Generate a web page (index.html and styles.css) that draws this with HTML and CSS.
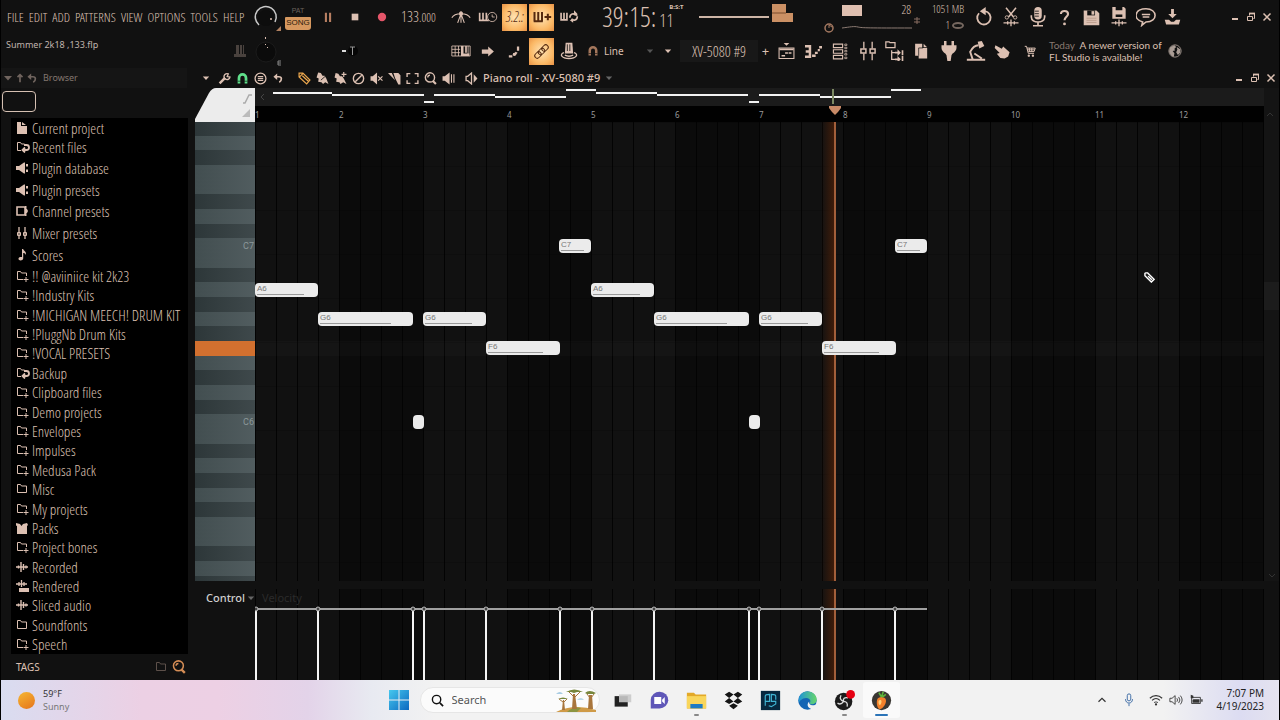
FILE: index.html
```html
<!DOCTYPE html>
<html lang="en">
<head>
<meta charset="utf-8">
<title>FL Studio - Piano roll</title>
<link rel="stylesheet" href="styles.css">
</head>
<body>
<svg class="sprite" aria-hidden="true">
  <symbol id="plus-folder" viewBox="0 0 14 12"><path d="M7 9.500H1.500v-8h3l1 1.500h5v3M7.500 9.500h5M10 7v5"/></symbol>
  <symbol id="folder" viewBox="0 0 14 12"><path d="M1.500 1.500h3l1 1.500h5v6.500h-9z"/></symbol>
  <symbol id="back-folder" viewBox="0 0 14 12"><path d="M5 9.500H1.500v-8h3l1 1.500h3"/><path d="M8 4h2.500a2 2 0 0 1 0 5H7M9 6.500L6.500 9 9 11.500" stroke-width="1.800"/></symbol>
  <symbol id="doc" viewBox="0 0 14 12"><path class="f" d="M1 0h4v4h6v8H1zM6 0l4 3H6z"/></symbol>
  <symbol id="plug" viewBox="0 0 14 12"><path class="f" d="M0 4h3l5-3.500h1v11H8L3 8H0zM10 2h2v2.500h-2zM10 7.500h2V10h-2z"/></symbol>
  <symbol id="channel" viewBox="0 0 14 12"><path d="M1 2h8v8H1z" stroke-width="1.600"/><path class="f" d="M9 4h2l1 2-1 2H9zM9 1h1.500v10H9z"/></symbol>
  <symbol id="mixer" viewBox="0 0 14 12"><path d="M3 0v12M9 0v12" stroke-width="1.300"/><path d="M1.500 5.500h3v3h-3zM7.500 5.500h3v3h-3z"/></symbol>
  <symbol id="note" viewBox="0 0 14 12"><path class="f" d="M6 0h1.200c0 2 3.800 2 2.500 6C9.500 4 7.500 4 7.200 4v5.500C7 12 2 12 2.500 9.500 3 7.700 5 7.800 6 8z"/></symbol>
  <symbol id="pack" viewBox="0 0 14 12"><path class="f" d="M0 1l4 1 1.500 2L7 2l4-1 1 2-1 1v8H1V4L0 3.500z"/></symbol>
  <symbol id="wave" viewBox="0 0 14 12"><path d="M0 6h12M2.500 4.500v3M5 1v10M7.500 3v6M10 4.500v3" stroke-width="1.400"/></symbol>
  <symbol id="rendered" viewBox="0 0 14 12"><path d="M0 4h11M3 2v4M5.500 0v7M8 2v4" stroke-width="1.300"/><path class="f" d="M3 8h10v4H3z"/></symbol>
  <symbol id="caret" viewBox="0 0 10 10"><path class="f" d="M1 3h8L5 7.500z"/></symbol>
  <symbol id="min" viewBox="0 0 12 12"><path class="f" d="M3 7h6v2H3z"/></symbol>
  <symbol id="restore" viewBox="0 0 12 12"><path d="M2.500 5.500h5v4h-5zM4.500 4.500v-2h5v5h-1"/><path d="M4 2.500h6" stroke-width="1.800"/></symbol>
  <symbol id="close" viewBox="0 0 12 12"><path d="M2.500 2.500l7 7M9.500 2.500l-7 7" stroke-width="1.500"/></symbol>

  <symbol id="metro" viewBox="0 0 24 24"><path d="M12 5v14M12 8l-4 11M12 8l4 11M1 13c2-4 6-5 11-5s9 1 11 5" stroke-width="1.300"/><circle class="f" cx="12" cy="8" r="2.500"/></symbol>
  <symbol id="waitkeys" viewBox="0 0 24 24"><path d="M2 7v9M6 7v9M10 7v9M1 16h12" stroke-width="2"/><circle cx="17" cy="12" r="5.500"/><path d="M17 9v3h3"/></symbol>
  <symbol id="blendkeys" viewBox="0 0 24 24"><path d="M3 6v11M7.500 6v11M12 6v11M2 17h11M15 12h8M19 8v8" stroke-width="2.400"/></symbol>
  <symbol id="loopkeys" viewBox="0 0 24 24"><path d="M2.500 7v8M6 7v8M9.500 7v8M1.500 15.500h9" stroke-width="2"/><path d="M13 13c0-5 5-6 7-3M22 11c0 5-5 6-7 3" stroke-width="2"/><path class="f" d="M18 4v5h-1l5 2V8zM17 14v5l-4-3z"/></symbol>
  <symbol id="keys" viewBox="0 0 24 24"><path d="M1 6h22v12H1zM5 6v12M9 6v12M1 10h10M1 14h10"/><path class="f" d="M12 6h3v12h-3zM17 6h2v8h-2zM20 6h1v12h-1zM13 15h9v3h-9z"/></symbol>
  <symbol id="arrow" viewBox="0 0 24 24"><path class="f" d="M4 9h9V5l8 7-8 7v-4H4z"/></symbol>
  <symbol id="steps" viewBox="0 0 24 24"><path d="M4 19h5M10 16c3 0 4-1 5-3M17 11v-6" stroke-width="3.200"/><circle class="f" cx="12" cy="16" r="2.300"/></symbol>
  <symbol id="link" viewBox="0 0 24 24"><g transform="rotate(-45 12 12)" stroke-width="1.400"><rect x="0" y="8.500" width="10" height="7" rx="3.500"/><rect x="7" y="8.500" width="10" height="7" rx="3.500"/><rect x="14" y="8.500" width="10" height="7" rx="3.500"/></g></symbol>
  <symbol id="hat" viewBox="0 0 24 24"><path class="f" d="M8 2h8l1 13H7z"/><path d="M10 4v8M13 4v8" stroke="#111"/><path d="M6 14c-6 2-3 7 6 7s12-5 6-7M7 17c3 1.500 7 1.500 10 0" stroke-width="1.600"/></symbol>
  <symbol id="magnet" viewBox="0 0 24 24"><path d="M5.500 21V11a6.500 6.500 0 0 1 13 0v10" stroke-width="5"/><path d="M3 17h6M15 17h6" stroke="#111" stroke-width="1.200"/></symbol>
  <symbol id="undo-big" viewBox="0 0 24 24"><path d="M6 7.500A8 8 0 1 0 13 5" stroke-width="2.200"/><path class="f" d="M14 0v10L7 5z"/></symbol>
  <symbol id="cut" viewBox="0 0 24 24"><path d="M6 1l9 11M18 1L9 12" stroke-width="1.800"/><circle cx="7" cy="12.500" r="2"/><circle cx="17" cy="12.500" r="2"/><path d="M3 19h18M8 17v4M12 15v8M16 17v4" stroke-width="1.600"/></symbol>
  <symbol id="mic" viewBox="0 0 24 24"><rect class="f" x="7.500" y="0" width="9" height="15" rx="4.500"/><path d="M8 5h5M8 8h5M8 11h5" stroke="#111"/><path d="M4 10v2c0 8 16 8 16 0v-2M12 18v4M6 22.500h12" stroke-width="2"/></symbol>
  <symbol id="help" viewBox="0 0 24 24"><path d="M7 7c0-6 10-5 10 0 0 4-5 4-5 9" stroke-width="3"/><circle class="f" cx="12" cy="21" r="2"/></symbol>
  <symbol id="save" viewBox="0 0 24 24"><path class="f" d="M1 2h18l4 4v17H1z"/><path d="M6 2h11v7H6z" fill="#111" stroke="none"/><path class="f" d="M12 3h4v5h-4z"/><path d="M5 13h14M5 16h14M5 19h14" stroke="#b09080"/></symbol>
  <symbol id="savenew" viewBox="0 0 24 24"><path class="f" d="M4 0h14l2 2v12H4z"/><path d="M8 0h8v4H8zM8 9h8v3H8z" fill="#111" stroke="none"/><path d="M3 19h18M8 17v4M12 15v8M16 17v4" stroke-width="1.600"/></symbol>
  <symbol id="chat" viewBox="0 0 24 24"><path d="M8 18l-1 4 5-4c15 0 14-16 0-16S-4 15 8 18zM7 9h10M8 12h8" stroke-width="1.900"/></symbol>
  <symbol id="download" viewBox="0 0 24 24"><path class="f" d="M10 0h4v7h4l-6 6-6-6h4zM1 15h6l3 3h4l3-3h6l-2 7H3z"/></symbol>
  <symbol id="playlist" viewBox="0 0 24 24"><path class="f" d="M8 0h8l-4 4z"/><path d="M1.500 7h21v15h-21z" stroke-width="1.500"/><path d="M2 9h20M5 18h5M10 14h4M15 14h4" stroke-width="2.200"/></symbol>
  <symbol id="roll" viewBox="0 0 24 24"><path d="M0 4.500h7v15H0M1 12h6" stroke-width="3.500"/><path d="M10 18h5M14 14h4M18 10h3M20 6h4" stroke-width="3.200"/></symbol>
  <symbol id="rack" viewBox="0 0 24 24"><path d="M2 1.500h13v5H2zM2 9.500h13v5H2zM2 17.500h13v5H2z" stroke-width="1.600"/><path d="M18 1.500h3v2h-3zM18 6h3v2h-3zM18 10.500h3v2h-3zM18 15h3v2h-3zM18 20h3v2h-3z"/></symbol>
  <symbol id="faders" viewBox="0 0 24 24"><path d="M7 1v8M7 15v8M17 1v8M17 15v8" stroke-width="1.600"/><path d="M3.500 9.500h6v5h-6zM14.500 9.500h6v5h-6z" stroke-width="1.800"/></symbol>
  <symbol id="tree" viewBox="0 0 24 24"><path d="M1 1h4l1 1h6v6H1zM8 11v11h4M8 14h4" stroke-width="1.500"/><path class="f" d="M12 13h3v-3l4 4-4 4v-3h-3zM12 21h3v-3l4 4-4 4v-3h-3zM20 11h2v6h-2zM20 18h2v6h-2z"/></symbol>
  <symbol id="copy" viewBox="0 0 24 24"><path class="f" d="M3 1h10v6h7v15H8v-4H3z"/><path d="M8 18V7h6" stroke="#111" stroke-width="1"/><path class="f" d="M15 1l5 5h-5z"/></symbol>
  <symbol id="plugin" viewBox="0 0 24 24"><path class="f" d="M6 0h3v5h6V0h3v5h3v3c0 5-5 6-6 9l-1 7h-4l-1-7c-1-3-6-4-6-9V5h3z"/></symbol>
  <symbol id="lamp" viewBox="0 0 24 24"><path class="f" d="M14 1l5-1 3 6-6 3z"/><path d="M15 5c-5 0-8 4-10 8l3 9M1 22.500h22M10 15l9 6" stroke-width="2.300"/></symbol>
  <symbol id="hand" viewBox="0 0 24 24"><path class="f" d="M2 3l9 5 2-3 9 8-2 6-5 3-6-1-5-6 4-1-7-7z"/></symbol>
  <symbol id="cart" viewBox="0 0 24 24"><path d="M3 4h3l3 12h10M7 7h14l-2 6H9M11 7v6M15 7v6M7 10h13" stroke-width="1.700"/><circle class="f" cx="10" cy="20" r="2"/><circle class="f" cx="17" cy="20" r="2"/></symbol>
  <symbol id="globe" viewBox="0 0 24 24"><circle cx="12" cy="12" r="10.500" stroke-width="1.500"/><path class="f" d="M4 5l7-3 3 3-3 3 1 3-4 1 3 4-1 6c-5-1-8-7-8-10zM15 5l6 4v6l-4 4-3-5 2-4z"/></symbol>

  <symbol id="wrench" viewBox="0 0 24 24"><path d="M3 21L13 11" stroke-width="4.500"/><path d="M19 3.500a5.500 5.500 0 1 0 3 6l-5-1z" stroke-width="2.500"/></symbol>
  <symbol id="menu-circle" viewBox="0 0 24 24"><circle cx="12" cy="12" r="10" stroke-width="2.400"/><path d="M7 8.500h10M7 12h10M7 15.500h10" stroke-width="2"/></symbol>
  <symbol id="undo" viewBox="0 0 24 24"><path d="M8 9h6c8 0 8 9 1 13" stroke-width="4"/><path class="f" d="M1 9l9-8v16z"/></symbol>
  <symbol id="pencil" viewBox="0 0 24 24"><path d="M2 2h7l13 13-6 7L2 9zM3 9l6-6M8 7l12 11" stroke-width="2.200"/></symbol>
  <symbol id="brush" viewBox="0 0 24 24"><path class="f" d="M4 1l5 1 3 5 4 0 3 5 4 10-6-3-4 3-3-3-6-1 1-6-4-2z"/><path d="M9 15l8-7" stroke="#111" stroke-width="1.500"/></symbol>
  <symbol id="brushplus" viewBox="0 0 24 24"><path class="f" d="M3 2l5 1 3 5 4 0 3 4 5 10-6-3-5 3-2-3-6-1 1-6-4-2z"/><path d="M18 0v9M14 4.500h9" stroke-width="2.200"/></symbol>
  <symbol id="ban" viewBox="0 0 24 24"><circle cx="12" cy="12" r="9.500" stroke-width="2.600"/><path d="M6 18L18 6" stroke-width="2.500"/></symbol>
  <symbol id="mute" viewBox="0 0 24 24"><path class="f" d="M1 8h4l8-7v22l-8-7H1z"/><path d="M15 8l8 8M23 8l-8 8" stroke-width="2.200"/></symbol>
  <symbol id="slice" viewBox="0 0 24 24"><path class="f" d="M0 2h7l6 13zM10 2h9l4 4v17h-4l-6-12z"/></symbol>
  <symbol id="select" viewBox="0 0 24 24"><path d="M2 9V3h6M16 3h6v6M22 15v6h-6M8 21H2v-6" stroke-width="2.500"/></symbol>
  <symbol id="zoom" viewBox="0 0 24 24"><circle cx="11" cy="10" r="8.500" stroke-width="2.600"/><path d="M16 16l6 6" stroke-width="4"/><path d="M7 10c0-3 2-4 4-4" stroke-width="2.500"/></symbol>
  <symbol id="playback" viewBox="0 0 24 24"><path class="f" d="M1 8h4l9-7v22l-9-7H1z"/><path d="M17.500 4v16M22 4v16" stroke-width="2"/></symbol>
  <symbol id="speaker" viewBox="0 0 24 24"><path d="M2 8h3l7-6v20l-7-6H2z" stroke-width="2.400"/><path class="f" d="M16 4l7 8-7 8z"/></symbol>
</svg>

<div class="app">
  <header class="top">
    <div class="bar">
      <nav class="menu" aria-label="Main menu">
        <button>FILE</button><button>EDIT</button><button>ADD</button><button>PATTERNS</button><button>VIEW</button><button>OPTIONS</button><button>TOOLS</button><button>HELP</button>
      </nav>
      <svg class="knob" viewBox="0 0 32 32" role="img" aria-label="Main volume"><path d="M9 24A10.500 10.500 0 1 1 25 21" stroke="#c9c9c9" stroke-width="1.500"/><circle cx="16" cy="17" r="8" fill="#0d0d0d" stroke="none"/><circle class="f" cx="21" cy="18" r="1"/><path d="M31 25v5h-5z" fill="#b08060" stroke="none"/></svg>
      <div class="mode"><button class="pat">PAT</button><button class="song">SONG</button></div>
      <button class="tb" aria-label="Pause"><svg viewBox="0 0 24 24"><path d="M9.500 7v11M14.500 7v11" stroke="#b87f62" stroke-width="2.500"/></svg></button>
      <button class="tb" aria-label="Stop"><svg viewBox="0 0 24 24"><path class="f" d="M8 8h8v8H8z"/></svg></button>
      <button class="tb rec" aria-label="Record"><svg viewBox="0 0 24 24"><circle class="f" cx="12" cy="12" r="5"/></svg></button>
      <div class="tempo">133<small>.000</small></div>
      <button class="tb" aria-label="Metronome"><svg><use href="#metro"/></svg></button>
      <button class="tb" aria-label="Wait for input"><svg><use href="#waitkeys"/></svg></button>
      <button class="tb lit" aria-label="Countdown"><i>3.2.:</i></button>
      <button class="tb lit" aria-label="Blend recording"><svg><use href="#blendkeys"/></svg></button>
      <button class="tb" aria-label="Loop recording"><svg><use href="#loopkeys"/></svg></button>
      <div class="time">39:15:<div class="ticks"><span class="unit">B:S:T</span><small>11</small></div></div>
      <div class="pos"><span></span></div>
      <svg class="blocks" viewBox="0 0 46 34" aria-hidden="true"><path d="M1 4h14v9h7v9H1z" fill="#cb9064" stroke="none"/><path d="M1 13h14" stroke="#7a4c2c"/></svg>
      <div class="cpu">
        <svg viewBox="0 0 108 34" aria-hidden="true"><path d="M25 5h20v11H25z" fill="#dfbfb0" stroke="none"/><circle cx="12" cy="28" r="4" stroke="#a57961" stroke-width="1.500"/><path d="M12 28v-3l3 2" stroke="#a57961"/><path d="M25 28c8-1 12-2 16-1s12 1 54 1" stroke="#8c7b73"/><path d="M100 17v7M97 19h6M97 22h6" stroke="#8a6f62"/></svg>
        <span>28</span>
      </div>
      <div class="mem"><span>1051 MB</span><span>1 <b></b></span></div>
      <button class="tb" aria-label="Undo"><svg><use href="#undo-big"/></svg></button>
      <button class="tb" aria-label="Edit audio"><svg><use href="#cut"/></svg></button>
      <button class="tb" aria-label="Record audio"><svg><use href="#mic"/></svg></button>
      <button class="tb" aria-label="Help"><svg class="mid"><use href="#help"/></svg></button>
      <button class="tb" aria-label="Save"><svg class="mid"><use href="#save"/></svg></button>
      <button class="tb" aria-label="Save new version"><svg><use href="#savenew"/></svg></button>
      <button class="tb" aria-label="Feedback"><svg><use href="#chat"/></svg></button>
      <button class="tb" aria-label="Download"><svg class="mid"><use href="#download"/></svg></button>
      <div class="win"><button aria-label="Minimize"><svg><use href="#min"/></svg></button><button aria-label="Restore"><svg><use href="#restore"/></svg></button><button aria-label="Close"><svg><use href="#close"/></svg></button></div>
    </div>
    <div class="bar">
      <div class="file">Summer 2k18 ,133.flp</div>
      <svg class="hat dim" viewBox="0 0 18 18" aria-hidden="true"><path class="f" d="M5 3h3v9H5zM9 3h2v9H9zM12 3h1v9h-1zM3 12h12v3H3z"/></svg>
      <svg class="knob" viewBox="0 0 32 32" role="img" aria-label="Main pitch"><circle cx="16" cy="17" r="10" fill="#0b0b0b" stroke="#1b1b1b"/><path class="f" d="M15 2h1v2h-1zM15 9h1v1h-1zM17 12h1v1h-1z"/><path d="M31 26h-3v4h3M28 28h3" stroke="#888"/></svg>
      <div class="shuffle"><svg viewBox="0 0 16 14" aria-hidden="true"><circle cx="11" cy="7" r="5" fill="#060606" stroke="none"/><path d="M0 7h4" stroke="#ddd" stroke-width="2"/><path d="M8 3h5M10.500 3v8" stroke="#999"/></svg></div>
      <button class="tb" aria-label="Typing keyboard"><svg><use href="#keys"/></svg></button>
      <button class="tb" aria-label="Step edit"><svg class="mid"><use href="#arrow"/></svg></button>
      <button class="tb" aria-label="Slide notes"><svg class="mid"><use href="#steps"/></svg></button>
      <button class="tb lit" aria-label="Link controllers"><svg class="mid"><use href="#link"/></svg></button>
      <button class="tb" aria-label="Riff machine"><svg><use href="#hat"/></svg></button>
      <svg class="snap-icon" aria-hidden="true"><use href="#magnet"/></svg>
      <div class="snap"><select aria-label="Snap"><option>Line</option></select><svg aria-hidden="true"><use href="#caret"/></svg></div>
      <button class="drop" aria-label="Pattern menu"><svg><use href="#caret"/></svg></button>
      <button class="pattern">XV-5080 #9</button>
      <button class="add" aria-label="Add pattern">+</button>
      <button class="tb" aria-label="Playlist"><svg class="mid"><use href="#playlist"/></svg></button>
      <button class="tb" aria-label="Piano roll"><svg class="mid"><use href="#roll"/></svg></button>
      <button class="tb" aria-label="Channel rack"><svg class="mid"><use href="#rack"/></svg></button>
      <button class="tb" aria-label="Mixer"><svg><use href="#faders"/></svg></button>
      <button class="tb" aria-label="Browser"><svg><use href="#tree"/></svg></button>
      <button class="tb" aria-label="Project picker"><svg class="mid"><use href="#copy"/></svg></button>
      <button class="tb" aria-label="Plugin picker"><svg><use href="#plugin"/></svg></button>
      <button class="tb" aria-label="Tempo tapper"><svg><use href="#lamp"/></svg></button>
      <button class="tb" aria-label="Touch controller"><svg class="mid"><use href="#hand"/></svg></button>
      <button class="tb" aria-label="Shop"><svg class="low"><use href="#cart"/></svg></button>
      <p class="news"><span>Today</span>&nbsp; A newer version of<br>FL Studio is available!</p>
      <svg class="globe" aria-hidden="true"><use href="#globe"/></svg>
    </div>
  </header>

  <div class="main">
    <aside class="browser">
      <div class="b-head"><svg><use href="#caret"/></svg><svg viewBox="0 0 12 12"><path d="M6 11V3M3 5l3-3 3 3" stroke-width="2"/></svg><svg><use href="#undo"/></svg><span>Browser</span></div>
      <div class="b-search"><input type="text" aria-label="Search browser"></div>
      <ul class="tree">
        <li><button><svg><use href="#doc"/></svg>Current project</button></li>
        <li><button><svg><use href="#back-folder"/></svg>Recent files</button></li>
        <li class="tall"><button><svg><use href="#plug"/></svg>Plugin database</button></li>
        <li class="tall"><button><svg><use href="#plug"/></svg>Plugin presets</button></li>
        <li class="tall"><button><svg><use href="#channel"/></svg>Channel presets</button></li>
        <li class="tall"><button><svg><use href="#mixer"/></svg>Mixer presets</button></li>
        <li class="tall"><button><svg><use href="#note"/></svg>Scores</button></li>
        <li><button><svg><use href="#plus-folder"/></svg>!! @aviiniice kit 2k23</button></li>
        <li><button><svg><use href="#plus-folder"/></svg>!Industry Kits</button></li>
        <li><button><svg><use href="#plus-folder"/></svg>!MICHIGAN MEECH! DRUM KIT</button></li>
        <li><button><svg><use href="#plus-folder"/></svg>!PluggNb Drum Kits</button></li>
        <li><button><svg><use href="#plus-folder"/></svg>!VOCAL PRESETS</button></li>
        <li><button><svg><use href="#back-folder"/></svg>Backup</button></li>
        <li><button><svg><use href="#plus-folder"/></svg>Clipboard files</button></li>
        <li><button><svg><use href="#plus-folder"/></svg>Demo projects</button></li>
        <li><button><svg><use href="#plus-folder"/></svg>Envelopes</button></li>
        <li><button><svg><use href="#plus-folder"/></svg>Impulses</button></li>
        <li><button><svg><use href="#plus-folder"/></svg>Medusa Pack</button></li>
        <li><button><svg><use href="#folder"/></svg>Misc</button></li>
        <li><button><svg><use href="#plus-folder"/></svg>My projects</button></li>
        <li><button><svg><use href="#pack"/></svg>Packs</button></li>
        <li><button><svg><use href="#plus-folder"/></svg>Project bones</button></li>
        <li><button><svg><use href="#wave"/></svg>Recorded</button></li>
        <li><button><svg><use href="#rendered"/></svg>Rendered</button></li>
        <li><button><svg><use href="#wave"/></svg>Sliced audio</button></li>
        <li><button><svg><use href="#folder"/></svg>Soundfonts</button></li>
        <li><button><svg><use href="#plus-folder"/></svg>Speech</button></li>
      </ul>
      <div class="tags"><span>TAGS</span><svg class="t-folder"><use href="#folder"/></svg><svg class="t-zoom"><use href="#zoom"/></svg></div>
    </aside>

    <section class="roll">
      <div class="r-head">
        <button class="ib" aria-label="Menu"><svg class="small"><use href="#caret"/></svg></button>
        <button class="ib" aria-label="Tools"><svg><use href="#wrench"/></svg></button>
        <button class="ib green" aria-label="Snap"><svg><use href="#magnet"/></svg></button>
        <button class="ib" aria-label="Stamp"><svg><use href="#menu-circle"/></svg></button>
        <button class="ib undo" aria-label="Undo"><svg><use href="#undo"/></svg></button>
        <button class="ib gold" aria-label="Draw"><svg><use href="#pencil"/></svg></button>
        <button class="ib" aria-label="Paint"><svg><use href="#brush"/></svg></button>
        <button class="ib" aria-label="Paint drums"><svg><use href="#brushplus"/></svg></button>
        <button class="ib" aria-label="Delete"><svg><use href="#ban"/></svg></button>
        <button class="ib" aria-label="Mute"><svg><use href="#mute"/></svg></button>
        <button class="ib" aria-label="Slice"><svg><use href="#slice"/></svg></button>
        <button class="ib" aria-label="Select"><svg><use href="#select"/></svg></button>
        <button class="ib" aria-label="Zoom"><svg><use href="#zoom"/></svg></button>
        <button class="ib" aria-label="Playback"><svg><use href="#playback"/></svg></button>
        <button class="ib title"><svg><use href="#speaker"/></svg>Piano roll - XV-5080 #9<svg class="small grey"><use href="#caret"/></svg></button>
        <div class="win"><button aria-label="Minimize"><svg><use href="#min"/></svg></button><button aria-label="Restore"><svg><use href="#restore"/></svg></button><button aria-label="Close"><svg><use href="#close"/></svg></button></div>
      </div>
      <div class="r-body">
        <svg class="corner" viewBox="0 0 60 34" aria-hidden="true"><path d="M0 34V31L14 5q3-5 7-5h39v34z" fill="#ececec" stroke="none"/><path d="M48 15h2l4-8h3" stroke="#aaa" stroke-width="1.500"/><path d="M55 21v8h-8z" fill="#bbb" stroke="none"/></svg>
        <div class="heads">
          <svg class="overview" aria-hidden="true">
            <path d="M9 6L6 9l3 3" stroke="#444"/>
            <path d="M18 5h59M77 7h92M169 14h10M179 7h61M240 9h71M311 2h30M341 5h61M402 7h91M494 14h10M504 7h61M565 9h71M636 2h30" stroke="#f2f2f2" stroke-width="2"/>
            <path d="M578 1v15" stroke="#7d8a63" stroke-width="2"/>
          </svg>
          <div class="ruler"><span>1</span><span>2</span><span>3</span><span>4</span><span>5</span><span>6</span><span>7</span><span>8</span><span>9</span><span>10</span><span>11</span><span>12</span>
            <svg class="marker" viewBox="0 0 12 10" aria-hidden="true"><path d="M0 0h12v2L9 6 6 9 3 6 0 2z" fill="#c88a67" stroke="none"/></svg></div>
        </div>
        <div class="side-top"><svg viewBox="0 0 12 12"><path d="M3 8l3-3 3 3"/></svg></div>
        <div class="keys"><span class="active"></span><span class="key c7">C7</span><span class="key c6">C6</span></div>
        <div class="grid">
          <span class="row-on"></span>
          <span class="play"></span>
          <div class="note a x1">A6</div><div class="note g x2">G6</div><div class="note c x3"></div><div class="note g x4">G6</div><div class="note f x5">F6</div><div class="note h x6">C7</div>
          <div class="note a x7">A6</div><div class="note g x8">G6</div><div class="note c x9"></div><div class="note g x10">G6</div><div class="note f x11">F6</div><div class="note h x12">C7</div>
          <svg class="cursor" viewBox="0 0 12 12" aria-hidden="true"><path d="M1 1.500L2 1h2l7 7-3 3-7-7zM4.500 4.500l4 4" fill="#222" stroke="#fff" stroke-width="1.500"/></svg>
        </div>
        <div class="scroll"><span></span><svg viewBox="0 0 12 12"><path d="M3 5l3 3 3-3"/></svg></div>
        <div class="control">Control<svg><use href="#caret"/></svg></div>
        <div class="velocity">
          <span>Velocity</span><span class="play"></span>
          <svg class="stems" aria-hidden="true">
            <path d="M0 20h672" stroke="#a0a0a0" stroke-width="2"/>
            <path d="M1 20v200M63 20v200M158 20v200M169 20v200M231 20v200M305 20v200M337 20v200M399 20v200M494 20v200M504 20v200M567 20v200M640 20v200" stroke="#f4f4f4" stroke-width="2"/>
            <g fill="#444" stroke="#bbb"><circle cx="1" cy="20" r="2"/><circle cx="63" cy="20" r="2"/><circle cx="158" cy="20" r="2"/><circle cx="169" cy="20" r="2"/><circle cx="231" cy="20" r="2"/><circle cx="305" cy="20" r="2"/><circle cx="337" cy="20" r="2"/><circle cx="399" cy="20" r="2"/><circle cx="494" cy="20" r="2"/><circle cx="504" cy="20" r="2"/><circle cx="567" cy="20" r="2"/><circle cx="640" cy="20" r="2"/></g>
          </svg>
        </div>
        <div class="side-end"></div>
      </div>
    </section>
  </div>
</div>

<footer class="taskbar">
  <div class="weather"><span class="sun"></span><p>59°F<br><span>Sunny</span></p></div>
  <div class="tasks">
    <button class="task start" aria-label="Start"><svg viewBox="0 0 20 20"><defs><linearGradient id="w" x2="1" y2="1"><stop stop-color="#46c8ee"/><stop offset="1" stop-color="#0b68c0"/></linearGradient></defs><path d="M0 0h9.500v9.500H0zM10.500 0H20v9.500h-9.500zM0 10.500h9.500V20H0zM10.500 10.500H20V20h-9.500z" fill="url(#w)" stroke="none"/></svg></button>
    <label class="search">
      <svg class="lens" viewBox="0 0 14 14"><circle cx="6" cy="6" r="4.500" stroke-width="1.500"/><path d="M9.500 9.500L13 13" stroke-width="1.800"/></svg>
      <input type="text" placeholder="Search" aria-label="Search">
      <svg class="art" viewBox="0 0 42 24" aria-hidden="true"><g stroke="none"><path d="M1 6q4-4 7 0z" fill="#a9cde4"/><path d="M22 12q4-4 7 0z" fill="#bcd9e9"/><path d="M1 24q18-9 40-2v2z" fill="#cf9a47"/><path d="M12 24q6-6 14-4l-4 4z" fill="#8c9440"/><path d="M18 6h2l2 15h-5zM34 7h3l1 14h-5zM8 12h1l1 10H7z" fill="#a8753c"/><path d="M11 4q8-5 17 0l-6 0-3 1-3-1zM30 5q4-4 11 0l-2 1h-7zM3 11q5-3 10 0z" fill="#77863c"/></g><path d="M19 9l-5-5M20 9l5-5M8 14l-4-3M9 14l3-3M35 10l-3-4M36 10l3-4" stroke="#a8753c"/></svg>
    </label>
    <button class="task" aria-label="Task view"><svg viewBox="0 0 24 24"><path d="M3 7h15v12H3z" fill="#222" stroke="none"/><path d="M8 5h14v9H8z" fill="#c9c9c9" stroke="none" opacity=".9"/></svg></button>
    <button class="task" aria-label="Chat"><svg viewBox="0 0 24 24"><path d="M2 21V11a10 9.500 0 1 1 10 10z" fill="#5f57b8" stroke="none"/><path d="M6 8h8v8H6zM15 11l3-3v8l-3-3z" fill="#fff" stroke="none"/></svg></button>
    <button class="task open" aria-label="File Explorer"><svg viewBox="0 0 24 24"><path d="M1 3h8l2 2h12v16H1z" fill="#e3a929" stroke="none"/><path d="M1 7h22v14H1z" fill="#f9d65b" stroke="none"/><path d="M5 16h14v5H5z" fill="#1d7bc4" stroke="none"/></svg></button>
    <button class="task" aria-label="Dropbox"><svg viewBox="0 0 24 24"><path d="M7 2l5 3-5 4-5-4zM17 2l5 3-5 4-5-4zM7 9l5 4-5 3-5-3zM17 9l5 4-5 3-5-3zM12 15l5 3-5 4-5-4z" fill="#151515" stroke="none"/></svg></button>
    <button class="task" aria-label="PG"><svg viewBox="0 0 24 24"><path d="M1 1h22v22H1z" fill="#07283f" stroke="none"/><path d="M6 18V7q0-2 5-2v8H6M18 11V7q0-2-5-2v8h5v3l-5 3-3-1" stroke="#3fb4d4" stroke-width="1.300"/></svg></button>
    <button class="task" aria-label="Edge"><svg viewBox="0 0 24 24"><defs><linearGradient id="e" x2="1"><stop stop-color="#1f95d6"/><stop offset="1" stop-color="#67d66a"/></linearGradient></defs><circle cx="12" cy="12" r="10.500" fill="#1464b4" stroke="none"/><path d="M2 11C3-2 23-1 22.500 12c-1 5-7 5-8 3 2-3 0-6-4-6-5 0-8 4-8.500 6z" fill="url(#e)" stroke="none"/><path d="M14 13c-1 4 4 6 9 3l1 5-6 1c-5-1-8-5-4-9z" fill="#f1f1f1" stroke="none"/></svg></button>
    <button class="task open" aria-label="OBS"><svg viewBox="0 0 24 24"><circle cx="11" cy="13" r="10" fill="#1b1b1b" stroke="none"/><path d="M8 6c-2 4 0 6 3 7M16 9c-4-1-6 1-5 4M11 13c3 0 5 2 4 6M11 13c-2 3-4 4-7 2" stroke="#ddd" stroke-width="1.500"/><circle cx="19" cy="5" r="5" fill="#e60012" stroke="none"/></svg></button>
    <button class="task current" aria-label="FL Studio"><svg viewBox="0 0 24 24"><circle cx="12" cy="12" r="11" fill="#3a3733" stroke="none"/><path d="M7 11c1-4 9-4 10 0 1 4-3 10-7 11-3-1-4-7-3-11z" fill="#f4802a" stroke="none"/><path d="M9 12c1-1 3-1 3 1s-1 4-2 4-2-3-1-5z" fill="#ffd07a" stroke="none"/><path d="M12 8L9 3M12 8l2-6M13 8l4-3" stroke="#5db53b" stroke-width="1.800"/></svg></button>
  </div>
  <div class="tray">
    <svg viewBox="0 0 16 16"><path d="M4 10l4-4 4 4" stroke-width="1.400"/></svg>
    <svg class="t-mic" viewBox="0 0 16 16"><rect x="6" y="1" width="4" height="8" rx="2"/><path d="M4 7c0 6 8 6 8 0M8 12v3"/></svg>
    <svg viewBox="0 0 16 16"><path d="M1 6c4-4 10-4 14 0M3.500 8.500c3-3 6-3 9 0M6 11c1-1 3-1 4 0" stroke-width="1.300"/><circle class="f" cx="8" cy="13" r="1.300"/></svg>
    <svg viewBox="0 0 16 16"><path d="M1 6h2.500L7 3v10l-3.500-3H1zM9 6q1.500 2 0 4M11 4.500q3 3.500 0 7M13 3q4 5 0 10"/></svg>
    <svg viewBox="0 0 16 16"><path d="M3 5h10v7H3z"/><path class="f" d="M5 7h7v4H4V8zM14 7h1.500v3H14zM2 2l3 1v3H2z"/></svg>
    <p>7:07 PM<br>4/19/2023</p>
  </div>
</footer>
</body>
</html>
```
FILE: styles.css
```css
:root {
  --narrow: "Open Sans Condensed Light", "Open Sans Condensed", "Liberation Sans Narrow", "DejaVu Sans Condensed", sans-serif;
  --ui: "Noto Sans", "Open Sans", sans-serif;
  --cream: #dcc0b2;
  --bg: #111111;
}
* { box-sizing: border-box; }
body {
  margin: 0;
  height: 100vh;
  display: flex;
  flex-direction: column;
  overflow: hidden;
  background: #000;
  color: var(--cream);
  font: 11px/14px var(--ui);
}
button, input, select { font: inherit; color: inherit; background: none; border: 0; padding: 0; margin: 0; }
p { margin: 0; }
svg { fill: none; stroke: currentColor; flex: none; display: block; }
.f { fill: currentColor; stroke: none; }
.sprite { position: absolute; width: 0; height: 0; }

.app {
  flex: 1;
  min-height: 0;
  display: flex;
  flex-direction: column;
  background: var(--bg);
  border: solid #000;
  border-width: 0 1px;
}
.bar { display: flex; align-items: center; height: 34px; }
.menu { width: 249px; display: flex; gap: 5px; padding-left: 6px; font: 300 13px/20px var(--narrow); flex: none; }
.knob { width: 32px; height: 34px; }
.mode { width: 32px; display: flex; flex-direction: column; align-items: center; font: 9px/12px "Liberation Sans", sans-serif; }
.pat { color: #6b625c; font-size: 7px; line-height: 12px; }
.song { width: 26px; height: 13px; background: #d6985f; color: #2c1a0c; border-radius: 1px 1px 3px 3px; font-size: 8px; }
.tb { width: 27px; height: 27px; flex: none; display: grid; place-items: center; }
.tb svg { width: 20px; height: 20px; }
.tb .mid { width: 17px; height: 17px; }
.tb .low { width: 14px; height: 14px; }
.rec { color: #e5566a; }
.lit { color: #54290f; width: 25px; margin: 0 1px; background: radial-gradient(#ffe3b4, #fbb865 65%, #e89145); font: 300 14px/20px var(--narrow); }
.tempo { width: 52px; padding-left: 6px; font: 300 15px/20px var(--narrow); }
.tempo small { font-size: 12px; }
.time { width: 115px; height: 34px; padding-left: 20px; display: flex; font: 300 27px/34px var(--narrow); }
.ticks { display: flex; flex-direction: column; padding: 3px 0 0 3px; line-height: 8px; }
.ticks small { font-size: 18px; line-height: 18px; }
.unit { font: bold 6px/8px var(--ui); padding-left: 10px; }
.pos { width: 74px; padding: 0 2px; flex: none; }
.pos span { display: block; height: 2px; background: #cdb5a6; }
.blocks { width: 46px; height: 34px; }
.cpu { width: 108px; height: 34px; position: relative; text-align: right; padding: 3px 14px; font: 300 12px/14px var(--narrow); flex: none; }
.cpu svg { position: absolute; inset: 0; width: 108px; height: 34px; }
.mem { width: 45px; display: flex; flex-direction: column; align-items: flex-end; padding-right: 6px; font: 300 11px/16px var(--narrow); white-space: nowrap; }
.mem b { display: inline-block; width: 12px; height: 7px; border: 2px solid #75675f; border-radius: 50%; }
.win { margin-left: auto; display: flex; gap: 4px; padding-right: 6px; }
.win svg { width: 12px; height: 12px; }

.file { width: 230px; padding-left: 5px; font-size: 9px; margin-top: -12px; color: #c0b4ae; }
.hat { width: 18px; height: 18px; }
.dim { color: #4a423e; margin-right: 1px; }
.shuffle { width: 165px; padding-left: 60px; }
.shuffle svg { width: 16px; height: 14px; }
.snap-icon { width: 12px; height: 12px; margin: 0 5px; color: #a4775c; }
.snap { width: 54px; display: flex; align-items: center; font-size: 10px; }
.snap select { appearance: none; width: 42px; }
.snap svg, .drop svg { width: 8px; height: 8px; }
.snap svg { color: #555; }
.drop { width: 19px; display: grid; place-items: center; }
.pattern { width: 78px; height: 22px; margin-left: 3px; background: #181818; font: 300 15px/22px var(--narrow); }
.add { width: 15px; font-size: 13px; }
.news { font: 10px/12px Lato, var(--ui); padding-left: 6px; white-space: nowrap; width: 118px; }
.news span { color: #887970; }
.globe { width: 14px; height: 14px; color: #a99c94; margin-left: 7px; }

.main { flex: 1; min-height: 0; display: flex; }
.browser { width: 194px; flex: none; display: flex; flex-direction: column; }
.b-head { height: 20px; margin-right: 8px; padding-left: 2px; display: flex; align-items: center; gap: 2px; background: #151515; color: #70645e; }
.b-head svg { width: 10px; height: 10px; }
.b-head span { color: #83766f; padding-left: 4px; font-size: 9px; }
.b-search { padding: 3px 1px 6px; }
.b-search input { display: block; width: 34px; height: 21px; border: 1px solid #d5c0b2; border-radius: 4px; }
.tree { list-style: none; margin: 0 7px 0 10px; padding: 0; flex: 1; min-height: 0; display: flex; flex-direction: column; background: #000; font: 300 15px/18px var(--narrow); }
.tree li { flex: 39 1 0; min-height: 0; display: flex; align-items: center; }
.tree .tall { flex-grow: 44; }
.tree button { display: flex; align-items: center; gap: 2px; padding-left: 5px; white-space: nowrap; }
.tree svg { width: 14px; height: 12px; }
.tags { height: 26px; display: flex; align-items: center; padding: 0 9px 0 15px; font: 10px/14px var(--ui); }
.tags span { flex: 1; }
.t-folder { width: 14px; height: 12px; color: #5d504a; margin-right: 3px; }
.t-zoom { width: 14px; height: 14px; color: #d58d56; }

.roll { flex: 1; min-width: 0; display: flex; flex-direction: column; }
.r-head { height: 20px; display: flex; align-items: center; padding-left: 2px; }
.ib { width: 18px; height: 18px; display: grid; place-items: center; flex: none; }
.ib svg { width: 13px; height: 13px; }
.ib .small { width: 8px; height: 8px; }
.undo { margin-right: 8px; }
.undo svg { width: 10px; height: 10px; }
.green { color: #5fe08b; }
.gold { color: #eda84e; }
.title { width: auto; display: flex; gap: 5px; padding-left: 8px; white-space: nowrap; font-weight: 500; }
.grey { color: #666; }
.r-head .win { padding-right: 2px; }
.r-body { flex: 1; min-height: 0; display: grid; grid-template: 34px 1fr 99px / 60px 1fr 15px; }
.corner { width: 60px; height: 34px; }
.heads { min-width: 0; overflow: hidden; }
.overview { width: 100%; height: 18px; background: #1b1b1b; }
.ruler { height: 16px; display: flex; background: #010101; position: relative; font: 8px/17px var(--ui); color: #9a9a9a; }
.ruler span { width: 84px; flex: none; }
.marker { position: absolute; left: 574px; top: 0; width: 12px; height: 10px; }
.side-top, .scroll { background: #141414; color: #333; }
.side-top { padding-top: 20px; }
.side-top svg, .scroll svg { width: 12px; height: 12px; }
.keys {
  position: relative;
  overflow: hidden;
  background:
    linear-gradient(90deg, transparent, rgba(190, 200, 205, .12)),
    linear-gradient(#2d3739 15px, #424e50 15px 29px, #2d3739 29px 44px, #424e50 44px 73px, #2d3739 73px 88px, #424e50 88px 103px, #2d3739 103px 117px, #424e50 117px 147px, #2d3739 147px 161px, #424e50 161px) 0 -1px / 100% 176px;
}
.key { position: absolute; right: 1px; font: 9px/14px Roboto, var(--ui); color: #8c989a; }
.c7 { top: 117px; }
.c6 { top: 293px; }
.active { position: absolute; inset: 219px 0 auto 0; height: 15px; background: #d2702f; }
.grid, .velocity {
  position: relative;
  overflow: hidden;
  background:
    repeating-linear-gradient(90deg, #030303 0 1px, transparent 1px 21px),
    repeating-linear-gradient(90deg, #111111 0 84px, #0b0b0b 84px 168px);
}
.grid::before { content: ""; position: absolute; inset: 0; background: repeating-linear-gradient(rgba(0, 0, 0, .2) 0 1px, transparent 1px 44px); }
.row-on { position: absolute; inset: 219px 0 auto 0; height: 15px; background: rgba(255, 255, 255, .02); }
.play { position: absolute; left: 566px; top: 0; bottom: 0; width: 15px; border-right: 2px solid #a35f3a; background: linear-gradient(90deg, transparent, #3e1c0a); }
.note { position: absolute; height: 14px; border-radius: 4px; background: #ebebeb; color: #777; padding-left: 2px; font: 8px/11px "Liberation Sans", sans-serif; }
.note::after { content: ""; position: absolute; left: 2px; right: 23%; bottom: 2px; height: 1px; background: #999; }
.note.c::after { display: none; }
.h { top: 117px; width: 32px; }
.a { top: 161px; width: 63px; }
.g { top: 190px; width: 95px; }
.f.note { top: 219px; width: 74px; }
.c { top: 293px; width: 11px; }
.x1 { left: 0; } .x2 { left: 63px; } .x3 { left: 158px; } .x4 { left: 168px; width: 63px; } .x5 { left: 231px; } .x6 { left: 304px; }
.x7 { left: 336px; } .x8 { left: 399px; } .x9 { left: 494px; } .x10 { left: 504px; width: 63px; } .x11 { left: 567px; } .x12 { left: 640px; }
.cursor { position: absolute; left: 889px; top: 150px; width: 11px; height: 11px; }
.scroll { display: flex; flex-direction: column; justify-content: space-between; align-items: center; padding-top: 160px; }
.scroll span { width: 15px; height: 28px; background: #1c1c1c; }
.control { display: flex; align-items: center; height: 34px; justify-content: flex-end; gap: 2px; font: 500 11px/14px var(--ui); color: #d0cfce; }
.control svg { width: 8px; height: 8px; color: #666; }
.velocity { margin-top: 8px; }
.velocity span:first-child { position: absolute; left: 7px; top: 2px; color: #2b2b2b; }
.stems { position: absolute; inset: 0; width: 100%; height: 100%; }

.taskbar {
  height: 40px;
  flex: none;
  margin: 0 1px;
  display: grid;
  grid-template-columns: 1fr auto 1fr;
  align-items: center;
  color: #333;
  background: linear-gradient(90deg, #d9dcf0, #ecd0e4 11%, #edd0e4 17%, #e3d3e9 24%, #e8eaf1 29%, #f2f2f2 34% 91%, #dcdcf2 97%, #e5e3ef);
}
.weather { display: flex; align-items: center; gap: 8px; padding-left: 17px; font-size: 9px; line-height: 13px; }
.weather p span { color: #777; }
.sun { width: 17px; height: 17px; border-radius: 50%; background: linear-gradient(150deg, #f6b733, #e5731b); }
.tasks { display: flex; align-items: center; height: 40px; }
.task { width: 37px; height: 36px; display: grid; place-items: center; position: relative; }
.task svg { width: 21px; height: 21px; }
.start svg { width: 20px; height: 20px; }
.open::after, .current::after { content: ""; position: absolute; bottom: 2px; left: 16px; width: 5px; height: 2px; border-radius: 1px; background: #888; }
.current { background: #fafafa; border-radius: 3px; }
.current::after { left: 12px; width: 13px; background: #2b74b8; }
.search { width: 180px; height: 26px; margin: 0 4px 0 2px; display: flex; align-items: center; gap: 8px; padding: 0 2px 0 10px; background: #fbfbfb; border: 1px solid #e6e6e6; border-radius: 13px; }
.search input { flex: 1; min-width: 0; font-size: 11px; }
.search input::placeholder { color: #555; opacity: 1; }
.lens { width: 13px; height: 13px; color: #111; }
.art { width: 42px; height: 24px; }
.tray { display: flex; align-items: center; justify-content: flex-end; padding-right: 15px; font-size: 10px; line-height: 13px; text-align: right; }
.tray svg { width: 14px; height: 14px; margin-right: 6px; }
.tray svg:first-child { margin-right: 13px; }
.tray .t-mic { color: #2d5f9e; margin-right: 13px; }
.tray p { padding-left: 8px; color: #222; }
```
